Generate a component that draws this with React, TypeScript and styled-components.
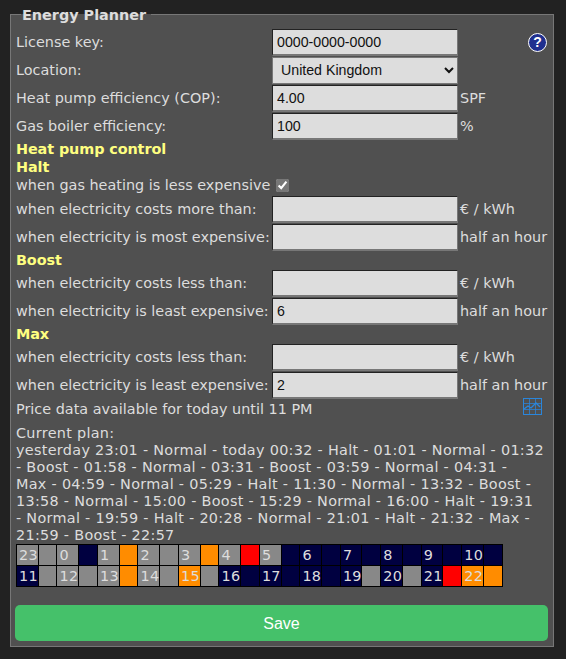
import { Fragment } from 'react';
import styled, { createGlobalStyle } from 'styled-components';

const GlobalStyle = createGlobalStyle`
  html, body {
    margin: 0;
    padding: 0;
    background: #222;
  }
  body {
    font-family: 'DejaVu Sans', Verdana, sans-serif;
    font-size: 14.4px;
    line-height: 17px;
    color: #ddd;
  }
`;

const Panel = styled.fieldset`
  box-sizing: border-box;
  width: 544px;
  height: 633px;
  margin: 14px 0 0 10px;
  padding: 13px 5px 0 5px;
  border: 1px solid #777;
  background: #505050;
  min-width: 0;
`;

const PanelTitle = styled.legend`
  margin-left: 5px;
  padding: 0 5px 0 1px;
  font-weight: bold;
  font-size: 14.4px;
  line-height: 0;
  color: #ddd;
`;

const FieldRow = styled.div`
  display: grid;
  grid-template-columns: 256px 186px 1fr;
  align-items: center;
  height: 28px;
  white-space: nowrap;
`;

const FieldLabel = styled.label`
  display: block;
`;

const Unit = styled.span`
  padding-left: 2px;
`;

const TextField = styled.input`
  box-sizing: border-box;
  width: 186px;
  height: 27px;
  padding: 1px 4px;
  border-width: 1px 1px 2px 1px;
  border-style: solid;
  border-color: #222 #777 #777 #222;
  background: #ddd;
  color: #111;
  font-family: 'Liberation Sans', Arial, sans-serif;
  font-size: 14.2px;
`;

const SelectField = styled.select`
  box-sizing: border-box;
  width: 186px;
  height: 27px;
  padding: 0 2px 0 4px;
  border: 1px solid #777;
  border-radius: 0;
  background: #ddd;
  color: #111;
  font-family: 'Liberation Sans', Arial, sans-serif;
  font-size: 14.2px;
`;

const HelpBadge = styled.span`
  justify-self: end;
  width: 19px;
  height: 19px;
  margin-right: 1px;
  box-sizing: border-box;
  border: 1px solid #fff;
  border-radius: 50%;
  background: #1f2f8f;
  color: #fff;
  font: bold 14px/17px 'Liberation Sans', Arial, sans-serif;
  text-align: center;
`;

const Heading = styled.div`
  font-weight: bold;
  letter-spacing: -0.1px;
  color: #ffff80;
  line-height: 18px;
`;

const CheckRow = styled.div`
  display: flex;
  align-items: center;
  gap: 6px;
  height: 19px;
`;

const Check = styled.input`
  width: 13px;
  height: 13px;
  margin: 0;
  accent-color: #777;
`;

const StatusRow = styled.div`
  display: flex;
  justify-content: space-between;
  align-items: center;
  height: 20px;
  padding-right: 6px;
`;

const ChartSvg = styled.svg`
  margin-bottom: 6px;
`;

const PlanText = styled.div`
  margin-top: 6px;
  letter-spacing: 0.3px;
`;

const PlanTable = styled.table`
  margin: 0;
  border-collapse: collapse;
  table-layout: fixed;
  border: 1px solid #000;
  width: 487px;
  letter-spacing: 0.3px;
`;

const PlanCell = styled.td<{ $state: string; $half?: boolean }>`
  border: 1px solid #000;
  padding: 0 0 0 2px;
  width: ${(p) => (p.$half ? '15.9px' : '18.6px')};
  height: 20px;
  line-height: 17px;
  white-space: nowrap;
  background: ${(p) => p.$state};
`;

const SaveButton = styled.button`
  display: block;
  width: 533px;
  height: 36px;
  margin: 18px 0 0 -1px;
  padding: 2px 0 0;
  border: 0;
  border-radius: 5px;
  background: #45c16a;
  color: #fff;
  font: 16px 'Liberation Sans', Arial, sans-serif;
`;

const G = '#888';
const N = '#000040';
const O = '#ff8c00';
const R = '#ff0000';

// every hour has two half hour cells
const planRows: [string, string, string][][] = [
  [['23', G, G], ['0', G, N], ['1', G, O], ['2', G, G], ['3', G, O], ['4', G, R], ['5', G, N], ['6', N, N], ['7', N, N], ['8', N, N], ['9', N, N], ['10', N, N]],
  [['11', N, G], ['12', G, G], ['13', G, O], ['14', G, G], ['15', O, G], ['16', N, N], ['17', N, N], ['18', N, N], ['19', N, G], ['20', N, G], ['21', N, R], ['22', O, O]],
];

function ChartIcon() {
  return (
    <ChartSvg width="19" height="17" viewBox="0 0 19 17" fill="none" stroke="#2a86dc" strokeWidth="1">
      <rect x="0.5" y="0.5" width="18" height="16" />
      <path d="M0.5 5.5H18.5M0.5 11.5H18.5M6.5 0.5V16.5M12.5 0.5V16.5" strokeOpacity="0.75" />
      <path d="M1 11L5 8L8 10L13 5L17 9" strokeWidth="1.3" />
    </ChartSvg>
  );
}

export default function App() {
  return (
    <>
      <GlobalStyle />
      <Panel>
        <PanelTitle>Energy Planner</PanelTitle>
        <FieldRow>
          <FieldLabel>License key:</FieldLabel>
          <TextField defaultValue="0000-0000-0000" />
          <HelpBadge>?</HelpBadge>
        </FieldRow>
        <FieldRow>
          <FieldLabel>Location:</FieldLabel>
          <SelectField defaultValue="uk">
            <option value="uk">United Kingdom</option>
          </SelectField>
        </FieldRow>
        <FieldRow>
          <FieldLabel>Heat pump efficiency (COP):</FieldLabel>
          <TextField defaultValue="4.00" />
          <Unit>SPF</Unit>
        </FieldRow>
        <FieldRow>
          <FieldLabel>Gas boiler efficiency:</FieldLabel>
          <TextField defaultValue="100" />
          <Unit>%</Unit>
        </FieldRow>
        <Heading>Heat pump control</Heading>
        <Heading>Halt</Heading>
        <CheckRow>
          when gas heating is less expensive
          <Check type="checkbox" defaultChecked />
        </CheckRow>
        <FieldRow>
          <FieldLabel>when electricity costs more than:</FieldLabel>
          <TextField />
          <Unit>€ / kWh</Unit>
        </FieldRow>
        <FieldRow>
          <FieldLabel>when electricity is most expensive:</FieldLabel>
          <TextField />
          <Unit>half an hour</Unit>
        </FieldRow>
        <Heading>Boost</Heading>
        <FieldRow>
          <FieldLabel>when electricity costs less than:</FieldLabel>
          <TextField />
          <Unit>€ / kWh</Unit>
        </FieldRow>
        <FieldRow>
          <FieldLabel>when electricity is least expensive:</FieldLabel>
          <TextField defaultValue="6" />
          <Unit>half an hour</Unit>
        </FieldRow>
        <Heading>Max</Heading>
        <FieldRow>
          <FieldLabel>when electricity costs less than:</FieldLabel>
          <TextField />
          <Unit>€ / kWh</Unit>
        </FieldRow>
        <FieldRow>
          <FieldLabel>when electricity is least expensive:</FieldLabel>
          <TextField defaultValue="2" />
          <Unit>half an hour</Unit>
        </FieldRow>
        <StatusRow>
          Price data available for today until 11 PM
          <ChartIcon />
        </StatusRow>
        <PlanText>
          Current plan:
          <br />
          yesterday 23:01 - Normal - today 00:32 - Halt - 01:01 - Normal - 01:32
          <br />
          - Boost - 01:58 - Normal - 03:31 - Boost - 03:59 - Normal - 04:31 -
          <br />
          Max - 04:59 - Normal - 05:29 - Halt - 11:30 - Normal - 13:32 - Boost -
          <br />
          13:58 - Normal - 15:00 - Boost - 15:29 - Normal - 16:00 - Halt - 19:31
          <br />
          - Normal - 19:59 - Halt - 20:28 - Normal - 21:01 - Halt - 21:32 - Max -
          <br />
          21:59 - Boost - 22:57
        </PlanText>
        <PlanTable>
          <tbody>
            {planRows.map((row) => (
              <tr key={row[0][0]}>
                {row.map(([hour, first, second]) => (
                  <Fragment key={hour}>
                    <PlanCell $state={first}>{hour}</PlanCell>
                    <PlanCell $state={second} $half />
                  </Fragment>
                ))}
              </tr>
            ))}
          </tbody>
        </PlanTable>
        <SaveButton>Save</SaveButton>
      </Panel>
    </>
  );
}
